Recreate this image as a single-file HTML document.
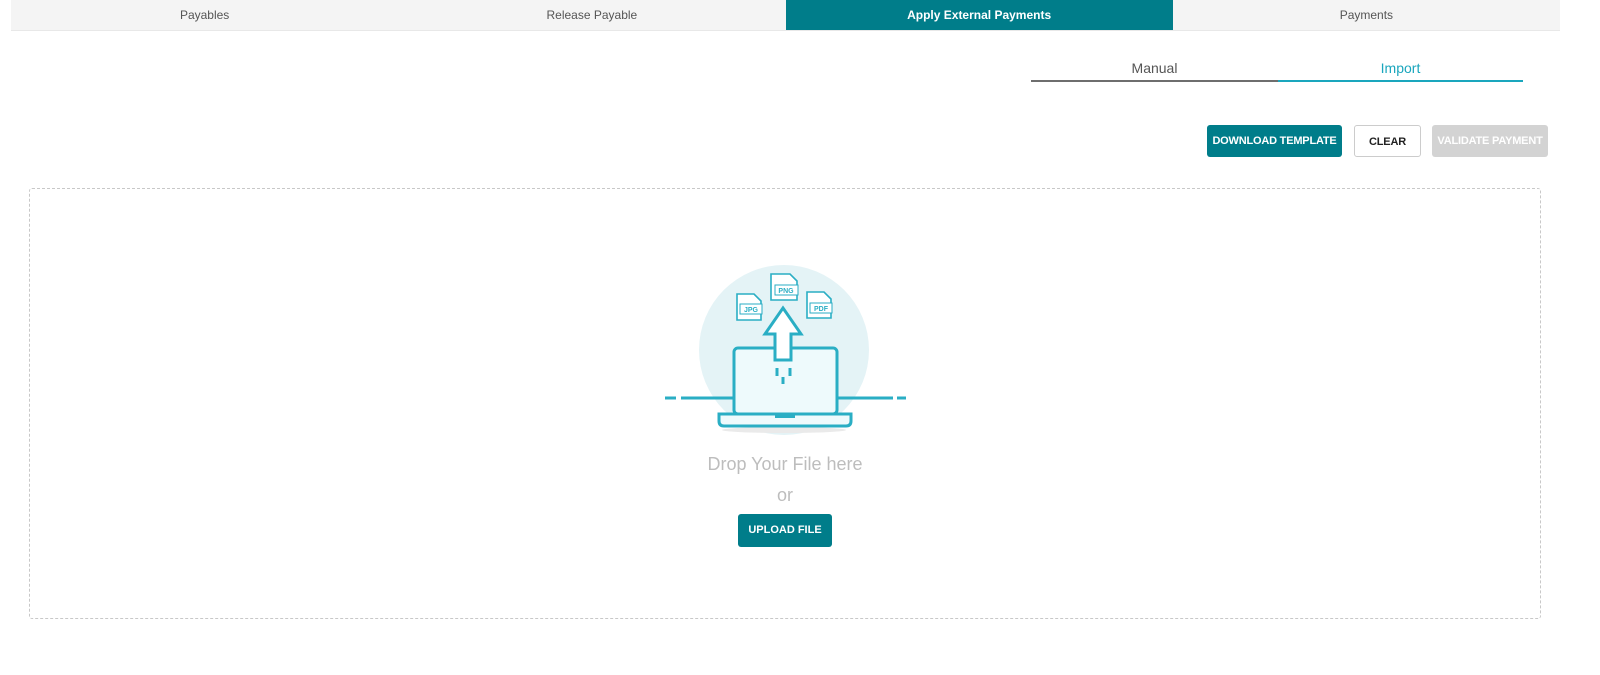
<!DOCTYPE html>
<html><head><meta charset="utf-8"><style>
*{box-sizing:border-box;margin:0;padding:0}
body{width:1600px;height:675px;background:#fff;font-family:"Liberation Sans",sans-serif;position:relative;overflow:hidden}
.tabs{position:absolute;left:11px;top:0;width:1549px;height:31px;background:#f4f4f4;display:flex;border-bottom:1px solid #e8e8e8}
.tabs div{flex:1;text-align:center;line-height:31px;font-size:12px;color:#555}
.tabs .act{background:#007d8a;color:#fff;font-weight:bold}
.seg{position:absolute;top:60px;font-size:14px;text-align:center;height:22px}
.btn{position:absolute;top:125px;height:32px;border-radius:3px;font-size:11px;font-weight:bold;text-align:center;line-height:32px;letter-spacing:-0.2px}
.drop{position:absolute;left:29px;top:188px;width:1512px;height:431px;border:1px dashed #c8c8c8;border-radius:3px}
</style></head><body>
<div class="tabs"><div>Payables</div><div>Release Payable</div><div class="act">Apply External Payments</div><div>Payments</div></div>
<div class="seg" style="left:1031px;width:247px;color:#555;border-bottom:2px solid #6e6e6e">Manual</div>
<div class="seg" style="left:1278px;width:245px;color:#1aa6bd;border-bottom:2px solid #1aa6bd">Import</div>
<div class="btn" style="left:1207px;width:135px;background:#007d8a;color:#fff">DOWNLOAD TEMPLATE</div>
<div class="btn" style="left:1354px;width:67px;background:#fff;color:#222;border:1px solid #ccc">CLEAR</div>
<div class="btn" style="left:1432px;width:116px;background:#d3d3d3;color:#fff">VALIDATE PAYMENT</div>
<div class="drop"></div>
<svg style="position:absolute;left:0;top:0" width="1600" height="675">
<circle cx="784" cy="350" r="85" fill="#e4f3f6"/>
<ellipse cx="784" cy="430" rx="62" ry="3" fill="#eaeaea"/>
<g stroke="#2aaec4" stroke-width="3" fill="none">
<line x1="665" y1="398" x2="676" y2="398"/><line x1="681" y1="398" x2="733" y2="398"/>
<line x1="838" y1="398" x2="893" y2="398"/><line x1="897" y1="398" x2="906" y2="398"/>
<rect x="734" y="348" width="103" height="66" rx="4" fill="#eefafc"/>
<path d="M719 414 H851 V421 Q851 426 846 426 H724 Q719 426 719 421 Z" fill="#eefafc"/>
<path d="M775 360 V334 H765 L783 308 L801 334 H791 V360 Z" fill="#fff"/>
<path d="M777 368 V376 M790 368 V376 M783 377 V384"/>
</g>
<rect x="775" y="414" width="20" height="4" fill="#2aaec4"/>
<g stroke="#2aaec4" stroke-width="1.6" fill="#fff">
<path d="M737 294 H754 L761 301 V320 H737 Z"/>
<path d="M771 274 H790 L797 281 V300 H771 Z"/>
<path d="M807 292 H824 L831 299 V318 H807 Z"/>
</g>
<g font-family="Liberation Sans" font-size="7" font-weight="bold" fill="#2aaec4" text-anchor="middle">
<rect x="740" y="304" width="22" height="10" fill="#fff" stroke="#2aaec4" stroke-width="1"/><text x="751" y="312">JPG</text>
<rect x="775" y="285" width="23" height="10" fill="#fff" stroke="#2aaec4" stroke-width="1"/><text x="786" y="293">PNG</text>
<rect x="810" y="303" width="22" height="10" fill="#fff" stroke="#2aaec4" stroke-width="1"/><text x="821" y="311">PDF</text>
</g>
</svg>
<div style="position:absolute;left:600px;width:370px;top:454px;text-align:center;font-size:18px;color:#bdbdbd">Drop Your File here</div>
<div style="position:absolute;left:600px;width:370px;top:485px;text-align:center;font-size:18px;color:#bdbdbd">or</div>
<div style="position:absolute;left:738px;top:514px;width:94px;height:33px;background:#007d8a;color:#fff;border-radius:3px;font-size:11px;font-weight:bold;text-align:center;line-height:33px">UPLOAD FILE</div>
</body></html>
